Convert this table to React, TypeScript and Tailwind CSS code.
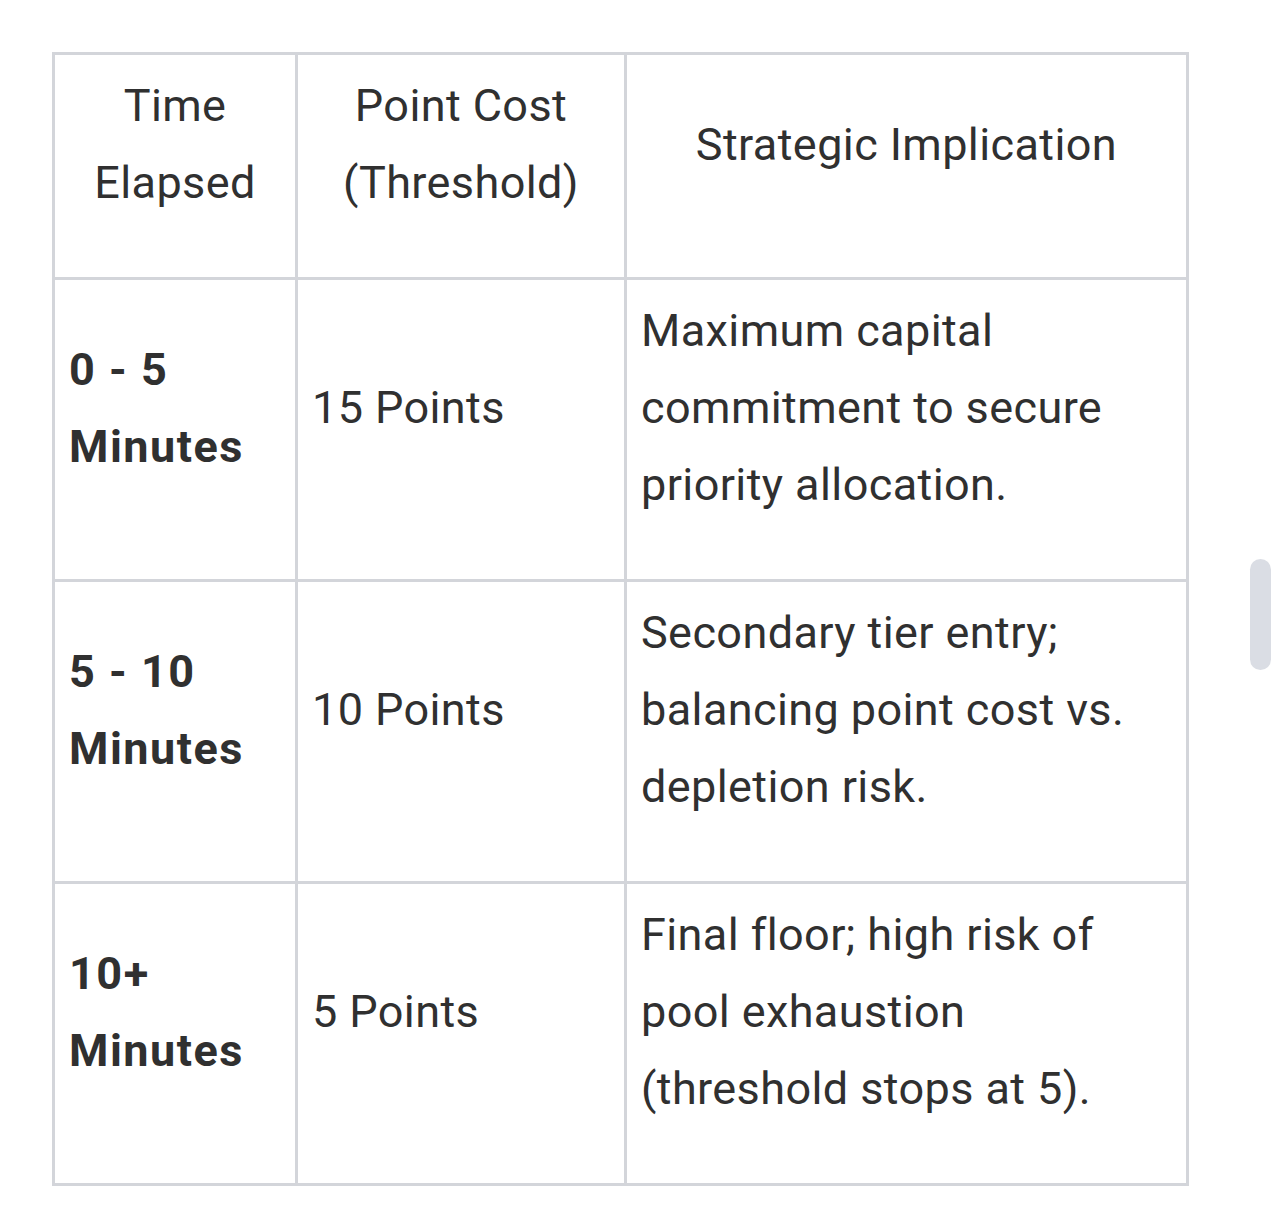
import React from 'react';

const rows = [
  {
    time: ['0 - 5', 'Minutes'],
    cost: '15 Points',
    note: 'Maximum capital commitment to secure priority allocation.',
  },
  {
    time: ['5 - 10', 'Minutes'],
    cost: '10 Points',
    note: 'Secondary tier entry; balancing point cost vs. depletion risk.',
  },
  {
    time: ['10+', 'Minutes'],
    cost: '5 Points',
    note: 'Final floor; high risk of pool exhaustion (threshold stops at 5).',
  },
];

export default function App() {
  return (
    <div
      className="relative min-h-[1231px] w-[1280px] bg-white pl-[52px] pt-[52px] text-[#303030]"
      style={{ fontFamily: 'Roboto, "Noto Sans", sans-serif' }}
    >
      <table className="w-[1137px] table-fixed border-collapse border-[3px] border-[#d3d5da] text-[45px] leading-[77px] tracking-[0.4px]">
        <colgroup>
          <col className="w-[243px]" />
          <col className="w-[329px]" />
          <col />
        </colgroup>
        <thead>
          <tr>
            <th className="border-[3px] border-[#d3d5da] px-[14px] pb-[56px] pt-[12px] text-center align-middle font-normal">
              Time Elapsed
            </th>
            <th className="border-[3px] border-[#d3d5da] px-[14px] pb-[56px] pt-[12px] text-center align-middle font-normal">
              Point Cost (Threshold)
            </th>
            <th className="border-[3px] border-[#d3d5da] px-[14px] pb-[56px] pt-[12px] text-center align-middle font-normal">
              Strategic Implication
            </th>
          </tr>
        </thead>
        <tbody>
          {rows.map((r) => (
            <tr key={r.cost}>
              <td className="border-[3px] border-[#d3d5da] px-[14px] pb-[56px] pt-[12px] align-middle font-bold tracking-[1.5px]">
                {r.time[0]}
                <br />
                {r.time[1]}
              </td>
              <td className="border-[3px] border-[#d3d5da] px-[14px] pb-[56px] pt-[12px] align-middle">
                {r.cost}
              </td>
              <td className="border-[3px] border-[#d3d5da] px-[14px] pb-[56px] pt-[12px] align-middle">
                {r.note}
              </td>
            </tr>
          ))}
        </tbody>
      </table>

      {/* scrollbar thumb */}
      <div className="absolute left-[1250px] top-[559px] h-[111px] w-[21px] rounded-full bg-[#dadde4]" />
    </div>
  );
}
